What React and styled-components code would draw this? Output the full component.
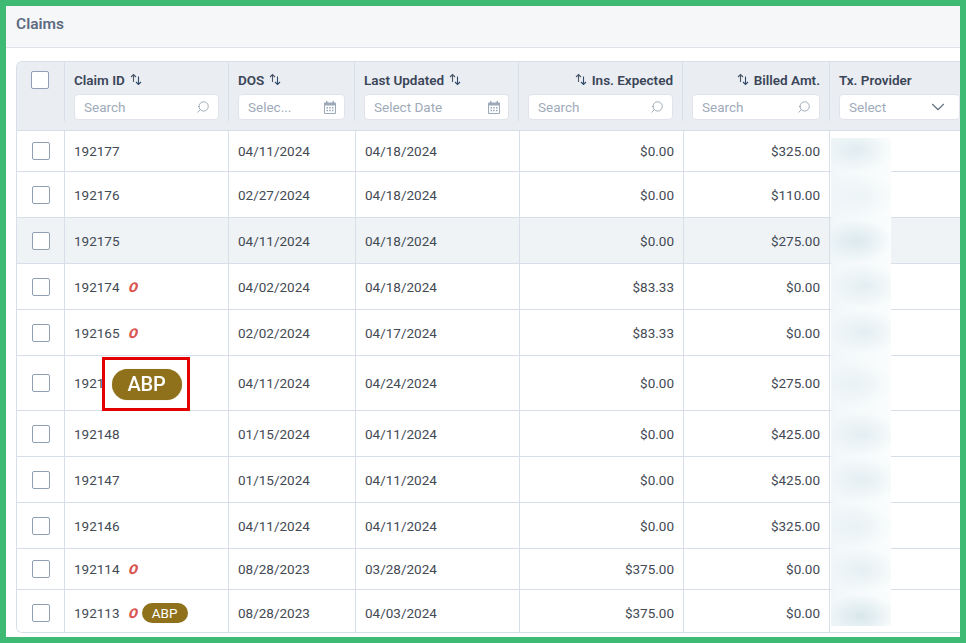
import styled, { createGlobalStyle } from "styled-components";
import { ChevronDown, Search } from "lucide-react";

const headColumns = "48px 164px 126px 164px 164px 147px 140px";
const bodyColumns = "48px 164px 127px 164px 164px 146px 140px";
const lineColor = "#d9dfe8";

const GlobalStyle = createGlobalStyle`
  * { box-sizing: border-box; }
  body {
    margin: 0;
    font-family: Roboto, "Liberation Sans", sans-serif;
    background: #fff;
  }
`
const Page = styled.div`
  width: 966px;
  height: 643px;
  border: 6px solid #3fba75;
  overflow: hidden;
  background: #fff;
`
const TitleBar = styled.div`
  height: 42px;
  padding: 0 10px 6px;
  display: flex;
  align-items: center;
  background: #f6f7f9;
  border-bottom: 1px solid #dfe3ea;
  color: #5c6b80;
  font-size: 15.5px;
  font-weight: 600;
`
const TableArea = styled.div`
  padding: 13px 0 0 10px;
`
const Table = styled.div`
  position: relative;
  border: 1px solid ${lineColor};
  border-right: 0;
  border-radius: 6px 0 0 6px;
  height: 572px;
  overflow: hidden;
`
const HeadRow = styled.div`
  display: grid;
  grid-template-columns: ${headColumns};
  height: 69px;
  background: #eaedf1;
  border-bottom: 1px solid ${lineColor};
`
const HeadCell = styled.div`
  display: flex;
  flex-direction: column;
  gap: 6px;
  padding: 9px 9px 0;
  border-right: 1px solid ${lineColor};
  &:first-child {
    padding: 9px 0 0 14px;
  }
  &:last-child {
    border-right: 0;
  }
`
const HeadLabel = styled.div`
  display: flex;
  align-items: center;
  justify-content: ${(p) => (p.$right ? "flex-end" : "flex-start")};
  gap: 5px;
  height: 17px;
  color: #3a4558;
  font-size: 13.5px;
  font-weight: 600;
  white-space: nowrap;
`
const FilterBox = styled.div`
  display: flex;
  align-items: center;
  justify-content: space-between;
  height: 26px;
  padding: 0 8px 0 9px;
  background: #fff;
  border: 1px solid #e0e4ea;
  border-radius: 4px;
  color: #a0abba;
  font-size: 13.5px;
`
const CheckBox = styled.span`
  display: block;
  width: 18px;
  height: 18px;
  background: #fff;
  border: 1px solid #8ea0b2;
  border-radius: 2px;
`
const Row = styled.div`
  display: grid;
  grid-template-columns: ${bodyColumns};
  height: ${(p) => p.$height}px;
  background: ${(p) => (p.$shaded ? "#eff3f6" : "#fff")};
  border-bottom: 1px solid ${lineColor};
`
const Cell = styled.div`
  position: relative;
  display: flex;
  align-items: center;
  justify-content: ${(p) => (p.$right ? "flex-end" : "flex-start")};
  padding: 0 9px;
  border-right: 1px solid ${lineColor};
  color: #434a54;
  font-size: 13.5px;
  &:last-child {
    border-right: 0;
  }
`
const CheckCell = styled(Cell)`
  padding: 0 0 0 15px;
`
const OverdueMark = styled.span`
  margin-left: 9px;
  color: #d9534f;
  font-size: 13.5px;
  font-style: italic;
  font-weight: 900;
  transform: skewX(-8deg);
`
const Badge = styled.span`
  display: inline-flex;
  align-items: center;
  justify-content: center;
  width: 46px;
  height: 20px;
  margin-left: 4px;
  border-radius: 10px;
  background: #8f701b;
  color: #fff;
  font-size: 13.5px;
`
const ZoomCallout = styled.div`
  position: absolute;
  left: 37px;
  top: 1px;
  width: 88px;
  height: 54px;
  display: flex;
  align-items: center;
  justify-content: center;
  background: #fff;
  border: 3px solid #e30000;
`
const BigBadge = styled(Badge)`
  width: 70px;
  height: 31px;
  margin: 0 0 0 1px;
  border-radius: 16px;
  box-shadow: 0 0 1px #cdb877;
  font-size: 20px;
  font-weight: 500;
  letter-spacing: -0.3px;
  filter: blur(0.4px);
`
const BlurPatch = styled.div`
  position: absolute;
  left: 814px;
  top: 76px;
  width: 60px;
  height: 488px;
  background: ${(p) => p.$blobs}, linear-gradient(90deg, #f1f7f9, #fbfdfd);
`
const SelectChevron = styled(ChevronDown)`
  margin: 0 2px 0 -8px;
`
const MirroredSearch = styled(Search)`
  transform: scaleX(-1);
`

const rowHeights = [41, 46, 46, 46, 46, 55, 46, 46, 46, 41, 46];
const claims = [
    { id: "192177", dos: "04/11/2024", updated: "04/18/2024", expected: "$0.00", billed: "$325.00" },
    { id: "192176", dos: "02/27/2024", updated: "04/18/2024", expected: "$0.00", billed: "$110.00" },
    { id: "192175", dos: "04/11/2024", updated: "04/18/2024", expected: "$0.00", billed: "$275.00", shaded: true },
    { id: "192174", overdue: true, dos: "04/02/2024", updated: "04/18/2024", expected: "$83.33", billed: "$0.00" },
    { id: "192165", overdue: true, dos: "02/02/2024", updated: "04/17/2024", expected: "$83.33", billed: "$0.00" },
    { id: "192149", callout: true, dos: "04/11/2024", updated: "04/24/2024", expected: "$0.00", billed: "$275.00" },
    { id: "192148", dos: "01/15/2024", updated: "04/11/2024", expected: "$0.00", billed: "$425.00" },
    { id: "192147", dos: "01/15/2024", updated: "04/11/2024", expected: "$0.00", billed: "$425.00" },
    { id: "192146", dos: "04/11/2024", updated: "04/11/2024", expected: "$0.00", billed: "$325.00" },
    { id: "192114", overdue: true, dos: "08/28/2023", updated: "03/28/2024", expected: "$375.00", billed: "$0.00" },
    { id: "192113", overdue: true, badge: true, dos: "08/28/2023", updated: "04/03/2024", expected: "$375.00", billed: "$0.00" },
];

// smeared provider names, one soft blob per row
const blobSpots = [
    [26, 12, 0.55], [30, 58, 0.25], [26, 103, 0.7], [34, 148, 0.5], [34, 194, 0.5], [26, 246, 0.35],
    [32, 296, 0.5], [32, 342, 0.5], [26, 388, 0.35], [32, 432, 0.45], [30, 478, 0.8],
];
const blobs = blobSpots
    .map(([x, y, a]) => `radial-gradient(ellipse 36px 22px at ${x}px ${y}px, rgba(208, 226, 232, ${a}), rgba(208, 226, 232, 0))`)
    .join(", ");

const SortIcon = () => (
    <svg width="12" height="13" viewBox="0 0 12 13" fill="none" stroke="#4a5568" strokeWidth="1.1">
        <path d="M3.500 9V1.500M1 4 3.500 1.500 6 4" />
        <path d="M8.500 3.500V11.500M6 9l2.500 2.500L11 9" stroke="#2f4a6b" />
    </svg>
);

const SearchIcon = () => <MirroredSearch size={14} color="#95a1b0" strokeWidth={1.5} />;

const CalendarIcon = () => (
    <svg width="12" height="13" viewBox="0 0 12 13" fill="#9aa8b8">
        <path d="M2 0h1.500v1.500h5V0H10v1.500h1a1 1 0 0 1 1 1V12a1 1 0 0 1-1 1H1a1 1 0 0 1-1-1V2.500a1 1 0 0 1 1-1h1zM1 4.500V12h10V4.500z" />
        <path d="M2.500 6h1.500v1.500H2.500zM5.200 6h1.500v1.500H5.200zM8 6h1.500v1.500H8zM2.500 8.800h1.500v1.500H2.500zM5.200 8.800h1.500v1.500H5.200zM8 8.800h1.500v1.500H8z" />
    </svg>
);

const Filter = ({ text, icon }) => (
    <FilterBox>
        {text}
        {icon}
    </FilterBox>
);

const columns = [
    { title: "Claim ID", sort: true, text: "Search", icon: <SearchIcon /> },
    { title: "DOS", sort: true, text: "Selec...", icon: <CalendarIcon /> },
    { title: "Last Updated", sort: true, text: "Select Date", icon: <CalendarIcon /> },
    { title: "Ins. Expected", sort: true, right: true, text: "Search", icon: <SearchIcon /> },
    { title: "Billed Amt.", sort: true, right: true, text: "Search", icon: <SearchIcon /> },
    { title: "Tx. Provider", text: "Select", icon: <SelectChevron size={22} color="#5f6f82" strokeWidth={1.2} /> },
];

const App = () => {
    return (
        <Page>
            <GlobalStyle />
            <TitleBar>Claims</TitleBar>
            <TableArea>
                <Table>
                    <HeadRow>
                        <HeadCell>
                            <CheckBox />
                        </HeadCell>
                        {columns.map((col) => (
                            <HeadCell key={col.title}>
                                <HeadLabel $right={col.right}>
                                    {col.right && <SortIcon />}
                                    {col.title}
                                    {col.sort && !col.right && <SortIcon />}
                                </HeadLabel>
                                <Filter text={col.text} icon={col.icon} />
                            </HeadCell>
                        ))}
                        <HeadCell />
                    </HeadRow>
                    {claims.map((claim, i) => (
                        <Row key={claim.id} $height={rowHeights[i]} $shaded={claim.shaded}>
                            <CheckCell>
                                <CheckBox />
                            </CheckCell>
                            <Cell>
                                {claim.id}
                                {claim.overdue && <OverdueMark>O</OverdueMark>}
                                {claim.badge && <Badge>ABP</Badge>}
                                {claim.callout && (
                                    <ZoomCallout>
                                        <BigBadge>ABP</BigBadge>
                                    </ZoomCallout>
                                )}
                            </Cell>
                            <Cell>{claim.dos}</Cell>
                            <Cell>{claim.updated}</Cell>
                            <Cell $right>{claim.expected}</Cell>
                            <Cell $right>{claim.billed}</Cell>
                            <Cell />
                        </Row>
                    ))}
                    <BlurPatch $blobs={blobs} />
                </Table>
            </TableArea>
        </Page>
    );
}

export default App;
